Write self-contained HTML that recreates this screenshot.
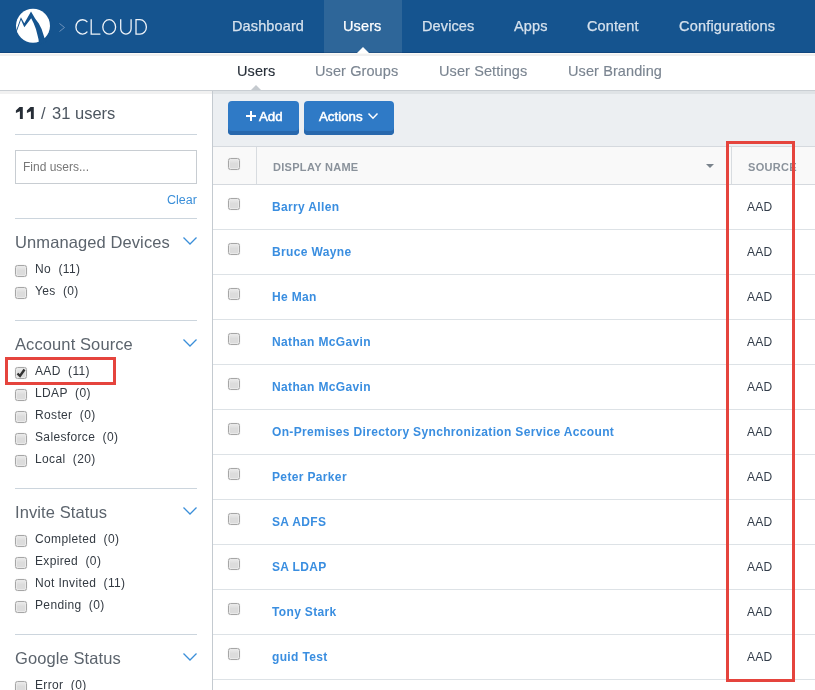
<!DOCTYPE html><html><head><meta charset="utf-8"><style>
*{box-sizing:border-box;margin:0;padding:0}
html,body{width:815px;height:690px;overflow:hidden;background:#fff;font-family:"Liberation Sans", sans-serif}
.a{position:absolute;white-space:nowrap;line-height:1;will-change:transform}
#nav{position:absolute;left:0;top:0;width:815px;height:53px;background:#15548f}
.nt{font-size:14.5px;letter-spacing:0.12px;color:#d5e1ed;-webkit-text-stroke:0.25px currentColor}
.st{font-size:14.5px;color:#8a8a8a;letter-spacing:0.1px;-webkit-text-stroke:0.15px currentColor}
.cb{position:absolute;width:12px;height:12px;border:1px solid #a6a6a6;border-radius:2.5px;background:linear-gradient(#ececec,#dcdcdc 45%,#dcdcdc);box-shadow:inset 0 0 0 1px #e9e9e9,0 0 1px rgba(0,0,0,0.2)}
.lbl{font-size:12px;color:#333a42;letter-spacing:0.35px}
.hd{font-size:16.5px;color:#5c646d;letter-spacing:0.1px}
.dv{position:absolute;left:15px;width:182px;height:1px;background:#ccd5dd}
.chev{position:absolute;left:183px;width:14px;height:8px}
.nm{font-size:12px;font-weight:bold;color:#3a8ee0;letter-spacing:0.35px}
.src{font-size:12px;color:#333d4a;letter-spacing:0.3px}
.btxt{font-size:13.3px;color:#fff;-webkit-text-stroke:0.5px #fff}
.rl{position:absolute;left:213px;width:602px;height:1px;background:#dde2e6}
</style></head><body>
<div id="nav"></div>
<div class="a" style="left:324px;top:0;width:78px;height:53px;background:#2e6699"></div>
<div class="a" style="left:0;top:52px;width:815px;height:1px;background:rgba(0,20,70,0.22)"></div>
<svg class="a" style="left:0;top:0" width="160" height="52" viewBox="0 0 160 52">
<circle cx="33" cy="25.8" r="17" fill="#fff"/>
<polygon fill="#15548f" points="16.3,30.3 20.9,17.3 24.3,23.3 31,11.5 35.1,18.4 38.8,23.6 41.6,28.9 43.2,34.1 44.5,38 47,41 40,45 38.8,41.9 38.5,39.3 37.2,34.1 35.9,28.9 33.8,23.6 31.2,18.2 24.3,27.3 21,19.7 16.7,31.7"/>
<path d="M59.5,23.5 L64.5,27.5 L59.5,31.5" fill="none" stroke="#6d92bb" stroke-width="1"/>
<g fill="none" stroke="#eef3f8" stroke-width="1.3">
<path d="M87.4,22.1 A6.6,7.15 0 1 0 87.4,31.7"/>
<path d="M91.2,19.2 V34.1 H100.4"/>
<ellipse cx="109.2" cy="26.9" rx="6.4" ry="7.2"/>
<path d="M120.7,19.2 V28.8 A5.2,5.3 0 0 0 131.1,28.8 V19.2"/>
<path d="M136,19.7 V34.1 H140 A6.4,7.2 0 0 0 140,19.7 Z"/>
</g>
</svg>
<div class="a nt" style="left:231.5px;top:19px;color:#d5e1ed">Dashboard</div>
<div class="a nt" style="left:343.2px;top:19px;color:#ffffff">Users</div>
<div class="a nt" style="left:421.5px;top:19px;color:#d5e1ed">Devices</div>
<div class="a nt" style="left:514.2px;top:19px;color:#d5e1ed">Apps</div>
<div class="a nt" style="left:587.2px;top:19px;color:#d5e1ed">Content</div>
<div class="a nt" style="left:679.4px;top:19px;color:#d5e1ed;letter-spacing:0.2px">Configurations</div>
<div class="a" style="left:357px;top:47px;width:0;height:0;border-left:6px solid transparent;border-right:6px solid transparent;border-bottom:6px solid #fff"></div>
<div class="a" style="left:0;top:53px;width:815px;height:38px;background:#fff;border-bottom:1px solid #c9ced3"></div>
<div class="a" style="left:0;top:53px;width:815px;height:1px;background:#fbfaf6"></div>
<div class="a" style="left:0;top:54px;width:815px;height:2px;background:#f0f0f0"></div>
<div class="a st" style="left:236.9px;top:64px;color:#28303a">Users</div>
<div class="a st" style="left:315.4px;top:64px;color:#7b8591">User Groups</div>
<div class="a st" style="left:438.9px;top:64px;color:#7b8591">User Settings</div>
<div class="a st" style="left:567.7px;top:64px;color:#7b8591">User Branding</div>
<div class="a" style="left:251px;top:85px;width:0;height:0;border-left:5px solid transparent;border-right:5px solid transparent;border-bottom:5px solid #c5cacf"></div>
<div class="a" style="left:0;top:91px;width:213px;height:599px;background:#fff;border-right:1px solid #c4cad0"></div>
<div class="a" style="left:0;top:91px;width:212px;height:3px;background:#f1f1f1"></div>
<svg class="a" style="left:0;top:0" width="40" height="125" viewBox="0 0 40 125"><polygon fill="#262d36" points="22.8,107.1 22.8,118.9 19.9,118.9 19.9,111.2 15.9,113 15.9,110.6 19.5,107.1"/><polygon fill="#262d36" points="33.8,107.1 33.8,118.9 30.9,118.9 30.9,111.2 26.9,113 26.9,110.6 30.5,107.1"/></svg>
<div class="a" style="left:41px;top:105px;font-size:16.5px;color:#4d5660">/</div>
<div class="a" style="left:52px;top:105px;font-size:16.5px;color:#4d5660">31</div>
<div class="a" style="left:75px;top:105px;font-size:16.5px;color:#4d5660">users</div>
<div class="dv" style="top:134px"></div>
<div class="a" style="left:15px;top:150px;width:182px;height:34px;border:1px solid #c8cdd2;background:#fff"></div>
<div class="a" style="left:22.5px;top:160.7px;font-size:12px;color:#777">Find users...</div>
<div class="a" style="left:166.5px;top:194px;font-size:12.5px;color:#3b8fd9">Clear</div>
<div class="dv" style="top:218px"></div>
<div class="a hd" style="left:15px;top:234px">Unmanaged Devices</div>
<svg class="chev" style="top:237px" viewBox="0 0 14 8" width="14" height="8"><path d="M0.5,0.5 L7,7 L13.5,0.5" fill="none" stroke="#3b8fd9" stroke-width="1.3"/></svg>
<div class="cb" style="left:15px;top:265px"></div>
<div class="a lbl" style="left:35px;top:262.5px">No&nbsp;&nbsp;(11)</div>
<div class="cb" style="left:15px;top:287px"></div>
<div class="a lbl" style="left:35px;top:284.5px">Yes&nbsp;&nbsp;(0)</div>
<div class="dv" style="top:320px"></div>
<div class="a hd" style="left:15px;top:336px">Account Source</div>
<svg class="chev" style="top:339px" viewBox="0 0 14 8" width="14" height="8"><path d="M0.5,0.5 L7,7 L13.5,0.5" fill="none" stroke="#3b8fd9" stroke-width="1.3"/></svg>
<div class="cb" style="left:15px;top:367px"></div>
<div class="a lbl" style="left:35px;top:364.5px">AAD&nbsp;&nbsp;(11)</div>
<div class="cb" style="left:15px;top:389px"></div>
<div class="a lbl" style="left:35px;top:386.5px">LDAP&nbsp;&nbsp;(0)</div>
<div class="cb" style="left:15px;top:411px"></div>
<div class="a lbl" style="left:35px;top:408.5px">Roster&nbsp;&nbsp;(0)</div>
<div class="cb" style="left:15px;top:433px"></div>
<div class="a lbl" style="left:35px;top:430.5px">Salesforce&nbsp;&nbsp;(0)</div>
<div class="cb" style="left:15px;top:455px"></div>
<div class="a lbl" style="left:35px;top:452.5px">Local&nbsp;&nbsp;(20)</div>
<div class="dv" style="top:488px"></div>
<div class="a hd" style="left:15px;top:504px">Invite Status</div>
<svg class="chev" style="top:507px" viewBox="0 0 14 8" width="14" height="8"><path d="M0.5,0.5 L7,7 L13.5,0.5" fill="none" stroke="#3b8fd9" stroke-width="1.3"/></svg>
<div class="cb" style="left:15px;top:535px"></div>
<div class="a lbl" style="left:35px;top:532.5px">Completed&nbsp;&nbsp;(0)</div>
<div class="cb" style="left:15px;top:557px"></div>
<div class="a lbl" style="left:35px;top:554.5px">Expired&nbsp;&nbsp;(0)</div>
<div class="cb" style="left:15px;top:579px"></div>
<div class="a lbl" style="left:35px;top:576.5px">Not Invited&nbsp;&nbsp;(11)</div>
<div class="cb" style="left:15px;top:601px"></div>
<div class="a lbl" style="left:35px;top:598.5px">Pending&nbsp;&nbsp;(0)</div>
<div class="dv" style="top:634px"></div>
<div class="a hd" style="left:15px;top:650px">Google Status</div>
<svg class="chev" style="top:653px" viewBox="0 0 14 8" width="14" height="8"><path d="M0.5,0.5 L7,7 L13.5,0.5" fill="none" stroke="#3b8fd9" stroke-width="1.3"/></svg>
<div class="cb" style="left:15px;top:681px"></div>
<div class="a lbl" style="left:35px;top:678.5px">Error&nbsp;&nbsp;(0)</div>
<div class="a" style="left:213px;top:91px;width:602px;height:599px;background:#eceff2"></div>
<div class="a" style="left:213px;top:91px;width:602px;height:3px;background:#dfe3e6"></div>
<div class="a" style="left:228px;top:101px;width:71px;height:34px;background:#2f7ac6;border-radius:4px;box-shadow:inset 0 -4px 0 #2868ad"></div>
<div class="a" style="left:246px;top:115.2px;width:10px;height:1.6px;background:#fff"></div>
<div class="a" style="left:250.2px;top:111px;width:1.6px;height:10px;background:#fff"></div>
<div class="a btxt" style="left:259.2px;top:109.6px">Add</div>
<div class="a" style="left:304px;top:101px;width:90px;height:34px;background:#2f7ac6;border-radius:4px;box-shadow:inset 0 -4px 0 #2868ad"></div>
<div class="a btxt" style="left:319px;top:109.6px">Actions</div>
<svg class="a" style="left:367px;top:112px" width="12" height="8" viewBox="0 0 12 8"><path d="M1.5,1.5 L6,6.2 L10.5,1.5" fill="none" stroke="#fff" stroke-width="1.5"/></svg>
<div class="a" style="left:213px;top:146px;width:602px;height:544px;background:#fff"></div>
<div class="a" style="left:213px;top:146px;width:602px;height:39px;background:#f9f9f9;border-top:1px solid #d5d9de;border-bottom:1px solid #d5d9de"></div>
<div class="a" style="left:256px;top:147px;width:1px;height:37px;background:#d8dce0"></div>
<div class="a" style="left:731px;top:147px;width:1px;height:37px;background:#d8dce0"></div>
<div class="cb" style="left:228px;top:158px"></div>
<div class="a" style="left:272.5px;top:162px;font-size:11px;font-weight:bold;color:#8a929b;letter-spacing:0.3px">DISPLAY NAME</div>
<div class="a" style="left:747.5px;top:162px;font-size:11px;font-weight:bold;color:#8a929b;letter-spacing:0.3px">SOURCE</div>
<div class="a" style="left:706px;top:164px;width:0;height:0;border-left:4.5px solid transparent;border-right:4.5px solid transparent;border-top:4.5px solid #7a838c"></div>
<div class="cb" style="left:228px;top:198px"></div>
<div class="a nm" style="left:272px;top:201px">Barry Allen</div>
<div class="a src" style="left:747px;top:201px">AAD</div>
<div class="rl" style="top:229px"></div>
<div class="cb" style="left:228px;top:243px"></div>
<div class="a nm" style="left:272px;top:246px">Bruce Wayne</div>
<div class="a src" style="left:747px;top:246px">AAD</div>
<div class="rl" style="top:274px"></div>
<div class="cb" style="left:228px;top:288px"></div>
<div class="a nm" style="left:272px;top:291px">He Man</div>
<div class="a src" style="left:747px;top:291px">AAD</div>
<div class="rl" style="top:319px"></div>
<div class="cb" style="left:228px;top:333px"></div>
<div class="a nm" style="left:272px;top:336px">Nathan McGavin</div>
<div class="a src" style="left:747px;top:336px">AAD</div>
<div class="rl" style="top:364px"></div>
<div class="cb" style="left:228px;top:378px"></div>
<div class="a nm" style="left:272px;top:381px">Nathan McGavin</div>
<div class="a src" style="left:747px;top:381px">AAD</div>
<div class="rl" style="top:409px"></div>
<div class="cb" style="left:228px;top:423px"></div>
<div class="a nm" style="left:272px;top:426px">On-Premises Directory Synchronization Service Account</div>
<div class="a src" style="left:747px;top:426px">AAD</div>
<div class="rl" style="top:454px"></div>
<div class="cb" style="left:228px;top:468px"></div>
<div class="a nm" style="left:272px;top:471px">Peter Parker</div>
<div class="a src" style="left:747px;top:471px">AAD</div>
<div class="rl" style="top:499px"></div>
<div class="cb" style="left:228px;top:513px"></div>
<div class="a nm" style="left:272px;top:516px">SA ADFS</div>
<div class="a src" style="left:747px;top:516px">AAD</div>
<div class="rl" style="top:544px"></div>
<div class="cb" style="left:228px;top:558px"></div>
<div class="a nm" style="left:272px;top:561px">SA LDAP</div>
<div class="a src" style="left:747px;top:561px">AAD</div>
<div class="rl" style="top:589px"></div>
<div class="cb" style="left:228px;top:603px"></div>
<div class="a nm" style="left:272px;top:606px">Tony Stark</div>
<div class="a src" style="left:747px;top:606px">AAD</div>
<div class="rl" style="top:634px"></div>
<div class="cb" style="left:228px;top:648px"></div>
<div class="a nm" style="left:272px;top:651px">guid Test</div>
<div class="a src" style="left:747px;top:651px">AAD</div>
<div class="rl" style="top:679px"></div>
<div class="a" style="left:5px;top:357px;width:111px;height:28px;border:3px solid #e5443d"></div>
<div class="a" style="left:726px;top:141px;width:69px;height:541px;border:3px solid #e5443d"></div>
<svg class="a" style="left:15px;top:367px" width="12" height="12" viewBox="0 0 12 12"><path d="M2.5,6.5 L5,9 L9.5,2.5" fill="none" stroke="#333" stroke-width="2.4"/></svg>
</body></html>
